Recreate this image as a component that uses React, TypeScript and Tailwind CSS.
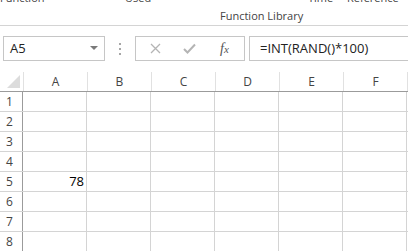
import React from 'react';

const cols = ['A', 'B', 'C', 'D', 'E', 'F', ''];
const rows = [1, 2, 3, 4, 5, 6, 7, 8];

function FormulaBar() {
  return (
    <div className="flex h-[25px] items-stretch pl-[3px]">
      {/* name box */}
      <div className="flex w-[102px] items-center justify-between border border-[#c6c6c6] pl-[6px] pr-[6px]">
        <span className="text-[13px] text-[#222]">A5</span>
        <svg width="8" height="5" viewBox="0 0 8 5">
          <path d="M0 0 L8 0 L4 4 Z" fill="#7a7a7a" />
        </svg>
      </div>
      {/* grip dots */}
      <div className="flex w-[30px] flex-col items-center justify-center gap-[3px]">
        <span className="h-[2px] w-[2px] bg-[#a6a6a6]" />
        <span className="h-[2px] w-[2px] bg-[#a6a6a6]" />
        <span className="h-[2px] w-[2px] bg-[#a6a6a6]" />
      </div>
      {/* cancel / enter / fx */}
      <div className="flex w-[110px] items-center border border-[#c6c6c6]">
        <svg className="ml-[14px]" width="11" height="11" viewBox="0 0 11 11">
          <path d="M1 1 L10 10 M10 1 L1 10" stroke="#b4b4b4" strokeWidth="1.3" />
        </svg>
        <svg className="ml-[22px]" width="13" height="11" viewBox="0 0 13 11">
          <path d="M1 6 L4.5 9.5 L12 1.5" stroke="#b4b4b4" strokeWidth="2" fill="none" />
        </svg>
        <span className="ml-[24px] font-['Liberation_Serif',serif] text-[14px] italic leading-none text-[#555]">
          f<span className="text-[11px]">x</span>
        </span>
      </div>
      {/* formula input */}
      <div className="ml-[4px] flex flex-1 items-center border border-r-0 border-[#c6c6c6] pl-[10px]">
        <span className="text-[13px] text-[#222]">=INT(RAND()*100)</span>
      </div>
    </div>
  );
}

function Grid() {
  return (
    <div className="flex flex-col">
      <div className="flex h-[20px] border-b border-[#9b9b9b]">
        <div className="relative w-[23px] shrink-0">
          <svg className="absolute right-[3px] bottom-[3px]" width="13" height="13" viewBox="0 0 13 13">
            <path d="M13 0 L13 13 L0 13 Z" fill="#dcdcdc" />
          </svg>
        </div>
        {cols.map((c, i) => (
          <div
            key={i}
            className="flex w-[64px] shrink-0 items-center justify-center border-l border-[#e1e1e1] text-[12px] text-[#444]"
          >
            {c}
          </div>
        ))}
      </div>
      {rows.map((r) => (
        <div key={r} className="flex h-[20px] border-b border-[#d4d4d4]">
          <div className="flex w-[23px] shrink-0 items-center border-r border-[#9b9b9b] pl-[6px] text-[12px] text-[#444]">
            {r}
          </div>
          {cols.map((c, i) => (
            <div
              key={i}
              className="flex w-[64px] shrink-0 items-center justify-end border-r border-[#d4d4d4] pr-[2px] text-[13px] text-black"
            >
              {r === 5 && c === 'A' ? '78' : ''}
            </div>
          ))}
        </div>
      ))}
    </div>
  );
}

export default function App() {
  return (
    <div className="h-[251px] w-[408px] overflow-hidden bg-white font-['Open_Sans','Noto_Sans',sans-serif]">
      <div className="flex h-[26px] flex-col overflow-hidden border-b border-[#d4d4d4] text-[11px] text-[#444]">
        <div className="-mt-[9px] flex h-[14px] shrink-0 leading-[14px]">
          <span className="w-[125px]">Function</span>
          <span className="w-[183px]">Used</span>
          <span className="w-[39px]">Time</span>
          <span>Reference</span>
        </div>
        <div className="mt-[4px] pl-[220px] leading-[14px]">Function Library</div>
      </div>
      <div className="pt-[10px] pb-[11px]">
        <FormulaBar />
      </div>
      <Grid />
    </div>
  );
}
